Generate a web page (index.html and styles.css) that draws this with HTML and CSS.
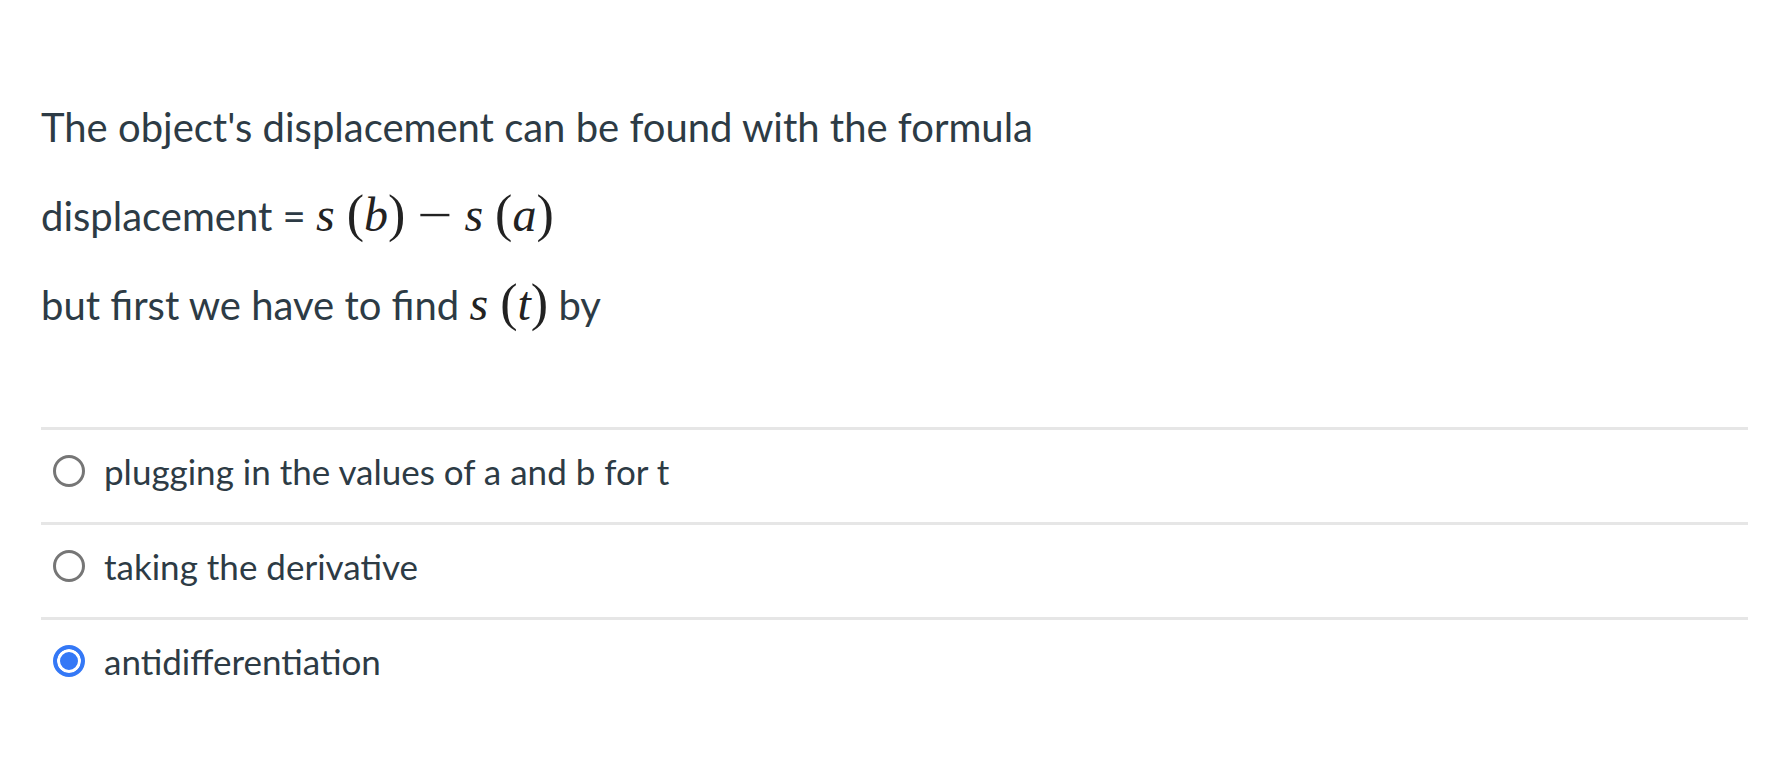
FILE: index.html
```html
<html><head>
  <title>Question</title>
  <link rel="stylesheet" href="styles.css">
</head>
<body>
<div class="question">
  <div class="text">
    <p>The object's displacement can be found with the formula</p>
    <p>displacement = <span class="math"><i>s</i><span class="sp"></span><span class="par">(</span><i>b</i><span class="par">)</span><span class="op">−</span><i>s</i><span class="sp"></span><span class="par">(</span><i>a</i><span class="par">)</span></span></p>
    <p>but first we have to find <span class="math"><i>s</i><span class="sp"></span><span class="par">(</span><i>t</i><span class="par">)</span></span> by</p>
  </div>

  <div class="answers">
    <label class="answer">
      <input type="radio" name="ans">
      <span>plugging in the values of a and b for t</span>
    </label>
    <label class="answer">
      <input type="radio" name="ans">
      <span>taking the derivative</span>
    </label>
    <label class="answer">
      <input type="radio" name="ans" checked="">
      <span>antidifferentiation</span>
    </label>
  </div>
</div>
</body></html>
```

FILE: styles.css
```css
body {
  margin: 0;
  background: #fff;
  color: #2d3b45;
  font-family: Lato, "Noto Sans", sans-serif;
  font-size: 40px;
}

.question {
  padding: 97px 28px 0 41px;
}

.text p {
  margin: 0 0 29px 0;
  line-height: 60px;
}

.text p:last-child {
  margin-bottom: 0;
}

.math {
  font-family: "Liberation Serif", "DejaVu Serif", serif;
  font-size: 48px;
  line-height: 1;
  color: #222;
}

.math i {
  font-style: italic;
}

.math .sp {
  display: inline-block;
  width: 12px;
}

.math .par {
  font-size: 52px;
  font-weight: 300;
}

.math .op {
  display: inline-block;
  margin: 0 16px;
  transform: scaleX(1.3);
}

.answers {
  margin-top: 92px;
}

.answer {
  display: flex;
  align-items: center;
  height: 82px;
  padding-bottom: 10px;
  border-top: 3px solid #e6e6e6;
  font-size: 35px;
}

.answer input {
  appearance: none;
  -webkit-appearance: none;
  width: 32px;
  height: 32px;
  margin: 0 19px 0 12px;
  border: 3px solid #767676;
  border-radius: 50%;
  background: #fff;
  flex-shrink: 0;
}

.answer input:checked {
  border: 4px solid #3478f6;
  background: #3478f6;
  box-shadow: inset 0 0 0 3px #fff;
}

.answer span {
  line-height: 54px;
}
```
